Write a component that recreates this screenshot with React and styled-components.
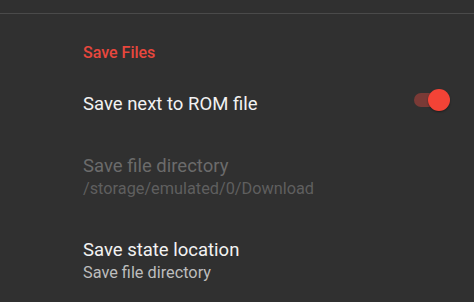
import React from 'react';
import styled, { createGlobalStyle } from 'styled-components';

const GlobalStyle = createGlobalStyle`
  html, body {
    margin: 0;
    padding: 0;
    background: #303030;
  }
  body {
    font-family: Roboto, "Noto Sans", "Liberation Sans", sans-serif;
  }
`;

const Screen = styled.div`
  width: 474px;
  height: 302px;
  overflow: hidden;
  background: #303030;
`;

const TopBar = styled.div`
  height: 13px;
  border-bottom: 1px solid #4a4a4a;
`;

const List = styled.div`
  padding: 0 24px 0 83px;
`;

const Category = styled.div`
  margin-top: 29px;
  padding-bottom: 8px;
  font-size: 16px;
  line-height: 20px;
  font-weight: 500;
  color: #e8473d;
`;

const Row = styled.div`
  display: flex;
  align-items: center;
  padding: ${p => (p.$compact ? '18px 0 17px' : '19px 0')};
`;

const Texts = styled.div`
  flex: 1;
  display: flex;
  flex-direction: column;
`;

const Title = styled.div`
  font-size: 18.5px;
  line-height: 24px;
  color: ${p => (p.$disabled ? '#6b6b6b' : '#f2f2f2')};
`;

const Summary = styled.div`
  font-size: 16.3px;
  line-height: 22px;
  color: ${p => (p.$disabled ? '#5f5f5f' : '#bdbdbd')};
`;

const Switch = styled.div`
  position: relative;
  width: 36px;
  height: 22px;
  margin-bottom: 7px;
`;

const Track = styled.div`
  position: absolute;
  left: 0;
  top: 4px;
  width: 34px;
  height: 14px;
  border-radius: 7px;
  background: #7a3a36;
`;

const Thumb = styled.div`
  position: absolute;
  right: 0;
  top: 0;
  width: 22px;
  height: 22px;
  border-radius: 50%;
  background: #f44336;
  box-shadow: 0 1px 2px rgba(0, 0, 0, 0.4);
`;

export default function App() {
  return (
    <Screen>
      <GlobalStyle />
      <TopBar />
      <List>
        <Category>Save Files</Category>
        <Row $compact>
          <Texts>
            <Title>Save next to ROM file</Title>
          </Texts>
          <Switch>
            <Track />
            <Thumb />
          </Switch>
        </Row>
        <Row>
          <Texts>
            <Title $disabled>Save file directory</Title>
            <Summary $disabled>/storage/emulated/0/Download</Summary>
          </Texts>
        </Row>
        <Row>
          <Texts>
            <Title>Save state location</Title>
            <Summary>Save file directory</Summary>
          </Texts>
        </Row>
      </List>
    </Screen>
  );
}
